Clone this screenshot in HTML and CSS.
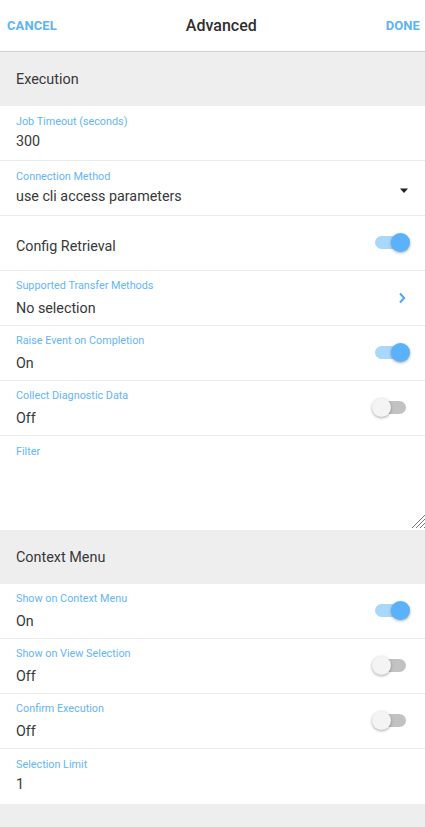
FILE: index.html
```html
<!DOCTYPE html>
<html lang="en">
<head>
<meta charset="utf-8">
<title>Advanced</title>
<link rel="stylesheet" href="styles.css">
</head>
<body>
<header class="topbar">
  <span class="action">CANCEL</span>
  <span class="title">Advanced</span>
  <span class="action done">DONE</span>
</header>
<main class="content">
  <div class="section">Execution</div>
  <div class="row">
    <div class="fields">
      <div class="label">Job Timeout (seconds)</div>
      <div class="value">300</div>
    </div>
  </div>
  <div class="row">
    <div class="fields">
      <div class="label">Connection Method</div>
      <div class="value">use cli access parameters</div>
    </div>
    <svg class="caret" width="10" height="6" viewBox="0 0 10 6"><path d="M1 0.5h8L5 5z" fill="#222"/></svg>
  </div>
  <div class="row">
    <div class="fields single">
      <div class="value">Config Retrieval</div>
    </div>
    <div class="toggle on"><span class="track"></span><span class="thumb"></span></div>
  </div>
  <div class="row">
    <div class="fields wide">
      <div class="label">Supported Transfer Methods</div>
      <div class="value">No selection</div>
    </div>
    <svg class="chevron" width="8" height="12" viewBox="0 0 8 12"><path d="M2 1.5l4.2 4.5L2 10.5" fill="none" stroke="#4fa9f2" stroke-width="2"/></svg>
  </div>
  <div class="row">
    <div class="fields wide">
      <div class="label">Raise Event on Completion</div>
      <div class="value">On</div>
    </div>
    <div class="toggle on"><span class="track"></span><span class="thumb"></span></div>
  </div>
  <div class="row">
    <div class="fields wide">
      <div class="label">Collect Diagnostic Data</div>
      <div class="value">Off</div>
    </div>
    <div class="toggle"><span class="track"></span><span class="thumb"></span></div>
  </div>
  <div class="row filter">
    <div class="fields">
      <div class="label">Filter</div>
    </div>
    <svg class="resizer" width="14" height="16" viewBox="0 0 14 16"><path d="M1 15L14 2M5 15L14 6M9 15L14 10M13 15L14 14" stroke="#777" stroke-width="1"/></svg>
  </div>
  <div class="section">Context Menu</div>
  <div class="row">
    <div class="fields wide">
      <div class="label">Show on Context Menu</div>
      <div class="value">On</div>
    </div>
    <div class="toggle on"><span class="track"></span><span class="thumb"></span></div>
  </div>
  <div class="row">
    <div class="fields wide">
      <div class="label">Show on View Selection</div>
      <div class="value">Off</div>
    </div>
    <div class="toggle"><span class="track"></span><span class="thumb"></span></div>
  </div>
  <div class="row">
    <div class="fields wide">
      <div class="label">Confirm Execution</div>
      <div class="value">Off</div>
    </div>
    <div class="toggle"><span class="track"></span><span class="thumb"></span></div>
  </div>
  <div class="row last">
    <div class="fields">
      <div class="label">Selection Limit</div>
      <div class="value">1</div>
    </div>
  </div>
</main>
</body>
</html>
```

FILE: styles.css
```css
html {
  background: #eeeeee;
}
body {
  margin: 0;
  font-family: Roboto, "Noto Sans", "Liberation Sans", sans-serif;
  color: #333333;
  background: #eeeeee;
}
.topbar {
  height: 51px;
  background: #ffffff;
  border-bottom: 1px solid #d0d0d0;
  display: flex;
  align-items: center;
  justify-content: space-between;
  padding: 0 5px 0 7px;
}
.action {
  color: #5cb3f7;
  font-size: 13px;
  font-weight: 700;
  letter-spacing: 0.1px;
}
.title {
  font-size: 16px;
  font-weight: 500;
  color: #2e2e2e;
}
.content {
  background: #ffffff;
}
.section {
  height: 54px;
  background: #eeeeee;
  display: flex;
  align-items: center;
  padding-left: 16px;
  font-size: 14.4px;
  color: #383838;
}
.row {
  height: 55px;
  box-sizing: border-box;
  border-bottom: 1px solid #ebebeb;
  display: flex;
  align-items: center;
  padding: 0 15px 0 16px;
  background: #ffffff;
}
.row.last {
  border-bottom: none;
}
.fields {
  flex: 1;
  align-self: flex-start;
  padding-top: 9px;
  display: flex;
  flex-direction: column;
}
.fields.wide {
  padding-top: 8px;
}
.fields.wide .value {
  margin-top: 5px;
}
.fields.single {
  padding-top: 20px;
}
.label {
  font-size: 10.8px;
  line-height: 14px;
  color: #63b5f7;
}
.value {
  font-size: 14.3px;
  line-height: 20px;
  margin-top: 2px;
  color: #383838;
}
.fields.single .value {
  margin-top: 0;
}
.caret {
  margin-right: 1px;
  margin-top: 6px;
}
.chevron {
  margin-right: 4px;
}
.toggle {
  position: relative;
  width: 38px;
  height: 20px;
  margin-top: -2px;
}
.track {
  position: absolute;
  left: 5px;
  right: 4px;
  top: 4px;
  height: 13px;
  border-radius: 7px;
  background: #c2c2c2;
}
.thumb {
  position: absolute;
  left: 0;
  top: 1px;
  width: 19px;
  height: 19px;
  border-radius: 50%;
  background: #f4f4f4;
  box-shadow: 0 1px 3px rgba(0, 0, 0, 0.35);
}
.toggle.on .track {
  left: 3px;
  right: 5px;
  background: #a9d8fd;
}
.toggle.on .thumb {
  left: 19px;
  background: #5bb2fc;
}
.row.filter {
  height: 94px;
  border-bottom: none;
  position: relative;
}
.resizer {
  position: absolute;
  right: 0;
  bottom: 1px;
}
```
